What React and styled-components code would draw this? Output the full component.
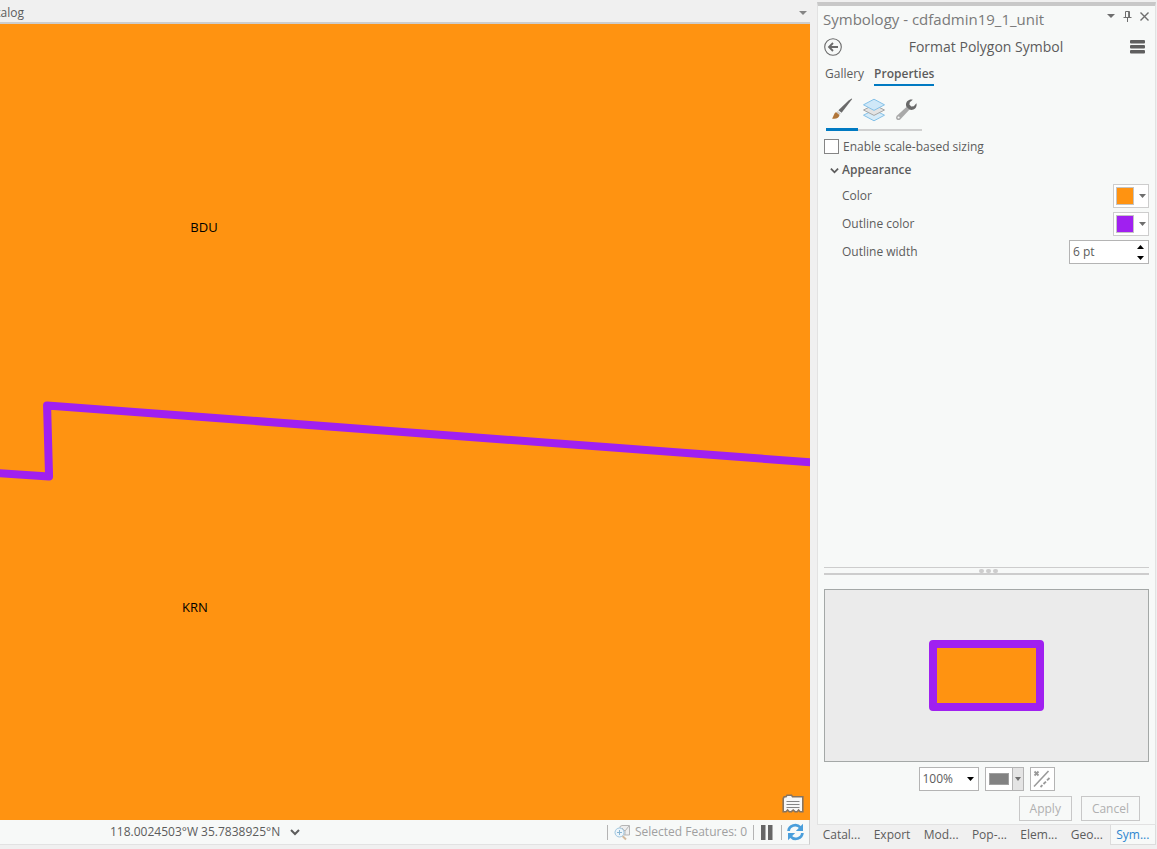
import { useState } from 'react';
import styled, { createGlobalStyle, ThemeProvider } from 'styled-components';

const theme = {
  colors: {
    chrome: '#f0f0f0',
    panel: '#f7f9f8',
    text: '#5c5c5c',
    muted: '#b0b0b0',
    line: '#cdcdcd',
    blue: '#007ac2',
    orange: '#ff9311',
    purple: '#a020f0'
  },
  fonts: {
    small: '12px',
    medium: '14px',
    large: '15px'
  }
};

const GlobalStyle = createGlobalStyle`
  * {
    box-sizing: border-box;
  }
  body {
    margin: 0;
    background: #f0f0f0;
    overflow: hidden;
  }
  body, button, input, select {
    font-family: 'Open Sans', 'Noto Sans', sans-serif;
    font-size: 12px;
    line-height: 16px;
    color: #5c5c5c;
  }
  button {
    padding: 0;
    border: 0;
    background: none;
  }
  svg {
    display: block;
  }
`;

const Shell = styled.div`
  display: flex;
  gap: 7px;
  height: 100vh;
  padding-right: 1px;
`;

const MapPane = styled.main`
  flex: 1;
  min-width: 0;
  display: flex;
  flex-direction: column;
  padding-bottom: 4px;
`;

const ViewTabs = styled.div`
  display: flex;
  align-items: center;
  justify-content: space-between;
  height: 24px;
  padding: 3px 3px 0 0;
  border-bottom: 2px solid ${({ theme }) => theme.colors.line};
`;

const ViewTab = styled.button`
  margin-left: -18px;
`;

const MapView = styled.div`
  position: relative;
  flex: 1;
  min-height: 0;
  background: ${({ theme }) => theme.colors.orange};
  & > svg {
    width: 100%;
    height: 100%;
  }
`;

const MapLabel = styled.span`
  position: absolute;
  left: ${({ $x }) => $x}px;
  top: ${({ $y }) => $y}px;
  transform: translate(-50%, -50%);
  font-size: 13px;
  color: #000;
`;

const NotesButton = styled.button`
  position: absolute;
  right: 6px;
  bottom: 7px;
`;

const StatusBar = styled.footer`
  display: flex;
  align-items: center;
  height: 25px;
  padding: 0 5px 0 110px;
  background: ${({ theme }) => theme.colors.panel};
  border-right: 1px solid ${({ theme }) => theme.colors.line};
  border-bottom: 1px solid #e2e2e2;
`;

const Coordinates = styled.button`
  display: flex;
  align-items: center;
  gap: 10px;
  margin-right: auto;
`;

const Divider = styled.span`
  width: 1px;
  height: 15px;
  background: #b4b4b4;
`;

const Selected = styled.span`
  display: flex;
  align-items: center;
  gap: 4px;
  margin: 0 6px;
  color: #a0a0a0;
`;

const PauseButton = styled.button`
  margin: 0 8px 0 7px;
`;

const RefreshButton = styled.button`
  margin-left: 5px;
`;

const Dock = styled.aside`
  width: 339px;
  display: flex;
  flex-direction: column;
  padding: 2px 0 4px;
`;

const Panel = styled.section`
  flex: 1;
  min-height: 0;
  display: flex;
  flex-direction: column;
  padding: 0 6px;
  background: ${({ theme }) => theme.colors.panel};
  border: 1px solid #e2e2e2;
  border-top: 4px solid #c8c8c8;
`;

const TitleBar = styled.header`
  display: flex;
  align-items: center;
  height: 26px;
  gap: 8px;
  & button {
    margin-bottom: 6px;
  }
`;

const Title = styled.h1`
  flex: 1;
  margin: 0;
  font-size: ${({ theme }) => theme.fonts.large};
  font-weight: 400;
  line-height: 24px;
  color: #7a7a7a;
  margin-left: -1px;
  white-space: nowrap;
`;

const SubHeader = styled.div`
  display: flex;
  align-items: center;
  justify-content: space-between;
  height: 30px;
  padding-right: 4px;
`;

const SubTitle = styled.h2`
  margin: 0;
  font-size: ${({ theme }) => theme.fonts.medium};
  font-weight: 400;
  line-height: 20px;
`;

const Tabs = styled.div`
  display: flex;
  gap: 10px;
  height: 24px;
  padding-left: 1px;
`;

const Tab = styled.button`
  height: 24px;
  padding-top: 2px;
  font-weight: ${({ $active }) => ($active ? 600 : 400)};
  border-bottom: 2px solid
    ${({ $active, theme }) => ($active ? theme.colors.blue : 'transparent')};
`;

const IconTabs = styled.div`
  display: flex;
  align-self: flex-start;
  height: 45px;
  margin-left: 2px;
`;

const IconTab = styled.button`
  display: flex;
  align-items: center;
  justify-content: center;
  width: 32px;
  padding-top: 4px;
  border-bottom: 3px solid
    ${({ $active, theme }) => ($active ? theme.colors.blue : '#d0d0d0')};
  border-bottom-width: ${({ $active }) => ($active ? 3 : 2)}px;
`;

const CheckRow = styled.label`
  display: flex;
  align-items: center;
  gap: 4px;
  height: 31px;
`;

const Checkbox = styled.input`
  appearance: none;
  width: 15px;
  height: 15px;
  margin: 0;
  background: #fff;
  border: 1px solid #858585;
`;

const GroupHeader = styled.button`
  display: flex;
  align-items: center;
  gap: 3px;
  height: 16px;
  padding-left: 6px;
  font-weight: 600;
`;

const Fields = styled.div`
  display: grid;
  gap: 4px;
  padding: 6px 0 0 18px;
`;

const Field = styled.div`
  display: flex;
  align-items: center;
  justify-content: space-between;
  height: 24px;
`;

const ColorButton = styled.button`
  display: flex;
  align-items: center;
  justify-content: space-between;
  width: 36px;
  height: 24px;
  padding: 0 2px;
  background: #fff;
  border: 1px solid ${({ theme }) => theme.colors.line};
`;

const Swatch = styled.span`
  width: 18px;
  height: 18px;
  background: ${({ $color }) => $color};
  border: 1px solid #c4c4c4;
`;

const Spinner = styled.div`
  display: flex;
  width: 80px;
  height: 24px;
  background: #fff;
  border: 1px solid #b4b4b4;
  & input {
    flex: 1;
    min-width: 0;
    padding: 0 3px;
    border: 0;
    background: none;
  }
`;

const SpinnerButtons = styled.div`
  display: flex;
  flex-direction: column;
  width: 16px;
  & button {
    flex: 1;
    display: flex;
    align-items: center;
    justify-content: center;
  }
`;

const Splitter = styled.div`
  display: flex;
  align-items: center;
  justify-content: center;
  gap: 2px;
  height: 8px;
  margin-top: auto;
  padding-left: 4px;
  border: solid ${({ theme }) => theme.colors.line};
  border-width: 1px 0 2px;
  & span {
    width: 5px;
    height: 4px;
    border-radius: 2px;
    background: ${({ theme }) => theme.colors.line};
  }
`;

const Preview = styled.div`
  display: flex;
  align-items: center;
  justify-content: center;
  height: 173px;
  margin-top: 14px;
  background: #ebebeb;
  border: 1px solid #a4a8a7;
`;

const SymbolSample = styled.div`
  width: 115px;
  height: 71px;
  background: ${({ $fill }) => $fill};
  border: 8px solid ${({ $outline }) => $outline};
  border-radius: 4px;
`;

const PreviewTools = styled.div`
  display: flex;
  justify-content: center;
  gap: 6px;
  margin-top: 5px;
`;

const ZoomBox = styled.div`
  display: grid;
  align-items: center;
  width: 60px;
  height: 24px;
  background: #fff;
  border: 1px solid #b4b4b4;
  & > * {
    grid-area: 1 / 1;
  }
  & select {
    appearance: none;
    width: 100%;
    padding: 0 3px;
    border: 0;
    background: none;
  }
  & svg {
    justify-self: end;
    margin-right: 4px;
    pointer-events: none;
  }
`;

const BackgroundButton = styled.button`
  display: flex;
  align-items: stretch;
  width: 39px;
  height: 24px;
  background: #fff;
  border: 1px solid #b4b4b4;
`;

const BackgroundSwatch = styled.span`
  width: 20px;
  height: 12px;
  margin: 5px 3px;
  background: #828282;
  border: 1px solid #a0a0a0;
`;

const BackgroundArrow = styled.span`
  flex: 1;
  display: flex;
  align-items: center;
  justify-content: center;
  background: #e4e4e4;
  border-left: 1px solid #b4b4b4;
`;

const SquareButton = styled.button`
  display: flex;
  align-items: center;
  justify-content: center;
  width: 25px;
  height: 24px;
  background: #fff;
  border: 1px solid #b4b4b4;
`;

const Actions = styled.div`
  display: flex;
  justify-content: flex-end;
  gap: 9px;
  padding: 5px 9px 3px 0;
`;

const ActionButton = styled.button`
  height: 25px;
  padding: 0 10px;
  color: ${({ theme }) => theme.colors.muted};
  border: 1px solid #c8c8c8;
`;

const DockTabs = styled.nav`
  display: flex;
  height: 20px;
`;

const DockTab = styled.button`
  flex: 1 1 auto;
  padding: 0 5px;
  text-align: center;
  white-space: nowrap;
  color: ${({ $active }) => ($active ? '#2e86cf' : '#5c5c5c')};
  background: ${({ $active, theme }) =>
    $active ? theme.colors.panel : 'transparent'};
  border: solid ${({ $active }) => ($active ? '#dcdcdc' : 'transparent')};
  border-width: 0 1px 1px;
  &:first-child {
    padding-left: 4px;
  }
`;

const Caret = ({ color = '#6e6e6e', width = 7, up }) => (
  <svg width={width} height='4' viewBox='0 0 8 4' preserveAspectRatio='none'>
    <path d={up ? 'M0 4L4 0L8 4Z' : 'M0 0H8L4 4Z'} fill={color} />
  </svg>
);

const Chevron = ({ size = 10 }) => (
  <svg width={size} height={size} viewBox='0 0 10 10'>
    <path d='M1 3L5 7L9 3' fill='none' stroke='#5c5c5c' strokeWidth='2' />
  </svg>
);

const PinIcon = () => (
  <svg width='9' height='11' viewBox='0 0 9 11' fill='none' stroke='#6e6e6e'>
    <path d='M2.5 0.5H6.5V6M2.5 0.5V6M0.5 6.5H8.5M4.5 7V11' />
    <path d='M5.8 1V6' strokeWidth='1.4' />
  </svg>
);

const CloseIcon = () => (
  <svg width='9' height='9' viewBox='0 0 9 9'>
    <path d='M0.5 0.5L8.5 8.5M8.5 0.5L0.5 8.5' stroke='#6e6e6e' strokeWidth='1.4' />
  </svg>
);

const BackIcon = () => (
  <svg width='18' height='18' viewBox='0 0 18 18' fill='none' stroke='#6a6a6a'>
    <circle cx='9' cy='9' r='8.3' strokeWidth='1.1' />
    <path d='M14 9H5M9 5L5 9L9 13' strokeWidth='1.8' />
  </svg>
);

const MenuIcon = () => (
  <svg width='15' height='14' viewBox='0 0 15 14' fill='#5f5f5f'>
    <rect width='15' height='3.4' rx='1' />
    <rect y='5' width='15' height='3.4' rx='1' />
    <rect y='10' width='15' height='3.4' rx='1' />
  </svg>
);

const BrushIcon = () => (
  <svg width='22' height='22' viewBox='0 0 22 22'>
    <path d='M20.6 0.6L21.2 1.1L10.6 14.8L7.4 12.2L17.6 2.6Z' fill='#6a6a6a' />
    <path d='M6.6 13L9.8 15.6L8.8 16.8L5.5 14.2Z' fill='#c9c9c9' />
    <path d='M5.2 14.2C2.8 14.6 3.4 17.6 1 20.4C4.8 21.2 8.2 20 8.5 17Z' fill='#b0763a' />
  </svg>
);

const LayersIcon = () => (
  <svg width='24' height='24' viewBox='0 0 24 24' strokeLinejoin='round'>
    <path d='M1.5 17.2L12 11.8L22.5 17.2L12 22.8Z' fill='#d6ebf8' stroke='#84c1e8' />
    <path d='M1.5 12L12 6.8L22.5 12L12 17.4Z' fill='#e3e3e3' stroke='#a6a6a6' />
    <path d='M1.5 6.8L12 1.2L22.5 6.8L12 12.4Z' fill='#cfe8f8' stroke='#84c1e8' />
  </svg>
);

const WrenchIcon = () => (
  <svg width='22' height='22' viewBox='0 0 22 22'>
    <path
      d='M12 7.4L14.8 10.2L5.2 20.4C2.8 22.4 -0.4 19.4 1.8 16.8Z'
      fill='#a9a9a9'
    />
    <path
      d='M17.8 0.7C13.2 -0.5 9.8 3.8 11.4 7.7L14.4 10.6C18.6 12.2 22.6 8.6 21.4 4.3L18.8 7.2L16.2 7.4L14.4 5.6L14.8 3.2Z'
      fill='#696969'
    />
    <circle cx='3.6' cy='18.5' r='1.1' fill='#f7f9f8' />
  </svg>
);

const NotesIcon = () => (
  <svg width='22' height='19' viewBox='0 0 22 19'>
    <path
      d='M1.2 4.5L2.2 2.8H4L5 1.2H9.5L10.5 2.8H20.8V17.7H18L16.6 16L15.2 17.7H13L11.2 16L9.4 17.7H7.2L5.6 16L4 17.7H1.2Z'
      fill='#f7f7f7'
      stroke='#857462'
      strokeWidth='1.6'
    />
    <path d='M4.5 7.5H17.5M4.5 10.5H17.5M4.5 13.5H17.5' stroke='#858585' />
  </svg>
);

const SelectedIcon = () => (
  <svg width='17' height='17' viewBox='0 0 17 17' fill='none'>
    <path d='M6 4V2.5L8 1.5H15.5V11H10' fill='#eee' stroke='#b5b5b5' />
    <path d='M8 4L11 7L15 2M11 7V11' stroke='#b5b5b5' />
    <path d='M8.5 12L12 15.5' stroke='#d3b99d' strokeWidth='2' />
    <circle cx='5.5' cy='8.5' r='4.5' fill='#edf5fa' stroke='#9fc6df' />
    <path d='M3 8.5H8M5.5 6V11' stroke='#8ab6d2' />
  </svg>
);

const PauseIcon = () => (
  <svg width='12' height='15' viewBox='0 0 12 15' fill='#666'>
    <rect width='4.5' height='15' />
    <rect x='7' width='4.5' height='15' />
  </svg>
);

const RefreshIcon = () => (
  <svg width='17' height='18' viewBox='0 0 17 18' fill='none'>
    <path d='M1.6 8C2 2.4 9.5 0.2 13.3 4.4' stroke='#4a9edb' strokeWidth='2.8' />
    <path d='M16 0.8V8H8.8Z' fill='#4a9edb' />
    <path d='M15.4 10C15 15.6 7.5 17.8 3.7 13.6' stroke='#4a9edb' strokeWidth='2.8' />
    <path d='M1 17.2V10H8.2Z' fill='#4a9edb' />
  </svg>
);

const LinesIcon = () => (
  <svg width='18' height='18' viewBox='0 0 18 18' stroke='#9a9a9a' fill='none'>
    <path d='M1.5 1.5L5.5 5.5M5.5 1.5L1.5 5.5' strokeWidth='1.8' />
    <path d='M15.5 1L1 16.5' strokeWidth='1.6' />
    <path d='M16.5 8L7.5 17' strokeWidth='1.8' strokeDasharray='3.5 1.5' />
  </svg>
);

const dockTabs = ['Catal...', 'Export', 'Mod...', 'Pop-...', 'Elem...', 'Geo...', 'Sym...'];

const MapArea = () => (
  <MapPane>
    <ViewTabs>
      <ViewTab>Catalog</ViewTab>
      <button aria-label='View options'>
        <Caret color='#858585' width={8} />
      </button>
    </ViewTabs>
    <MapView>
      <svg viewBox='0 0 810 795' preserveAspectRatio='xMinYMin slice'>
        <polyline
          points='-10,448 49,452 47,381 820,438.5'
          fill='none'
          stroke={theme.colors.purple}
          strokeWidth='8'
          strokeLinejoin='round'
        />
      </svg>
      <MapLabel $x={204} $y={203}>BDU</MapLabel>
      <MapLabel $x={195} $y={583}>KRN</MapLabel>
      <NotesButton aria-label='Map notes'>
        <NotesIcon />
      </NotesButton>
    </MapView>
    <StatusBar>
      <Coordinates>
        118.0024503°W 35.7838925°N
        <Chevron />
      </Coordinates>
      <Divider />
      <Selected>
        <SelectedIcon />
        Selected Features: 0
      </Selected>
      <Divider />
      <PauseButton aria-label='Pause drawing'>
        <PauseIcon />
      </PauseButton>
      <Divider />
      <RefreshButton aria-label='Refresh'>
        <RefreshIcon />
      </RefreshButton>
    </StatusBar>
  </MapPane>
);

const SymbologyPanel = () => {
  const [scaled, setScaled] = useState(false);
  const [width, setWidth] = useState(6);

  return (
    <Panel>
      <TitleBar>
        <Title>Symbology - cdfadmin19_1_unit</Title>
        <button aria-label='Panel menu'>
          <Caret width={8} />
        </button>
        <button aria-label='Auto hide'>
          <PinIcon />
        </button>
        <button aria-label='Close'>
          <CloseIcon />
        </button>
      </TitleBar>
      <SubHeader>
        <button aria-label='Back'>
          <BackIcon />
        </button>
        <SubTitle>Format Polygon Symbol</SubTitle>
        <button aria-label='Options'>
          <MenuIcon />
        </button>
      </SubHeader>
      <Tabs>
        <Tab>Gallery</Tab>
        <Tab $active>Properties</Tab>
      </Tabs>
      <IconTabs>
        <IconTab $active aria-label='Symbol'>
          <BrushIcon />
        </IconTab>
        <IconTab aria-label='Layers'>
          <LayersIcon />
        </IconTab>
        <IconTab aria-label='Structure'>
          <WrenchIcon />
        </IconTab>
      </IconTabs>
      <CheckRow>
        <Checkbox
          type='checkbox'
          checked={scaled}
          onChange={e => setScaled(e.target.checked)}
        />
        Enable scale-based sizing
      </CheckRow>
      <GroupHeader>
        <Chevron size={9} />
        Appearance
      </GroupHeader>
      <Fields>
        <Field>
          <label htmlFor='color'>Color</label>
          <ColorButton id='color'>
            <Swatch $color={theme.colors.orange} />
            <Caret />
          </ColorButton>
        </Field>
        <Field>
          <label htmlFor='outline-color'>Outline color</label>
          <ColorButton id='outline-color'>
            <Swatch $color={theme.colors.purple} />
            <Caret />
          </ColorButton>
        </Field>
        <Field>
          <label htmlFor='outline-width'>Outline width</label>
          <Spinner>
            <input id='outline-width' value={`${width} pt`} readOnly />
            <SpinnerButtons>
              <button aria-label='Increase' onClick={() => setWidth(width + 1)}>
                <Caret color='#000' up />
              </button>
              <button
                aria-label='Decrease'
                onClick={() => setWidth(Math.max(0, width - 1))}
              >
                <Caret color='#000' />
              </button>
            </SpinnerButtons>
          </Spinner>
        </Field>
      </Fields>
      <Splitter>
        <span />
        <span />
        <span />
      </Splitter>
      <Preview>
        <SymbolSample $fill={theme.colors.orange} $outline={theme.colors.purple} />
      </Preview>
      <PreviewTools>
        <ZoomBox>
          <select aria-label='Preview zoom' defaultValue='100%'>
            <option>50%</option>
            <option>100%</option>
            <option>200%</option>
          </select>
          <Caret color='#000' />
        </ZoomBox>
        <BackgroundButton aria-label='Preview background'>
          <BackgroundSwatch />
          <BackgroundArrow>
            <Caret width={6} />
          </BackgroundArrow>
        </BackgroundButton>
        <SquareButton aria-label='Preview geometry'>
          <LinesIcon />
        </SquareButton>
      </PreviewTools>
      <Actions>
        <ActionButton disabled>Apply</ActionButton>
        <ActionButton disabled>Cancel</ActionButton>
      </Actions>
    </Panel>
  );
};

const App = () => (
  <ThemeProvider theme={theme}>
    <GlobalStyle />
    <Shell>
      <MapArea />
      <Dock>
        <SymbologyPanel />
        <DockTabs>
          {dockTabs.map(name => (
            <DockTab key={name} $active={name === 'Sym...'}>
              {name}
            </DockTab>
          ))}
        </DockTabs>
      </Dock>
    </Shell>
  </ThemeProvider>
);

export default App;
